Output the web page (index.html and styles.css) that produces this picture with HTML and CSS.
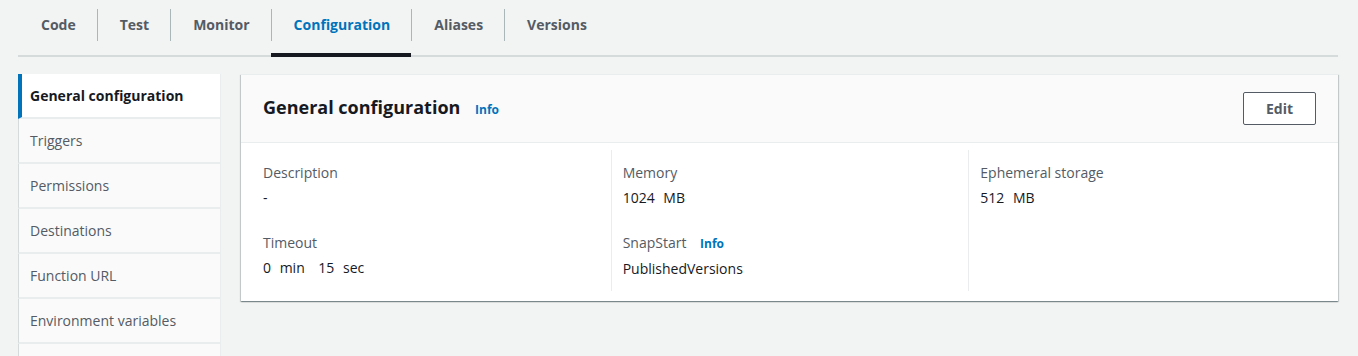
FILE: index.html
```html
<!DOCTYPE html>
<html lang="en">
<head>
    <meta charset="UTF-8">
    <title>Function configuration</title>
    <link rel="stylesheet" href="styles.css">
</head>
<body>

<div class="page">
    <div class="tabs">
        <a class="tab first"><span class="tab-label">Code</span></a>
        <a class="tab"><span class="tab-label">Test</span></a>
        <a class="tab"><span class="tab-label">Monitor</span></a>
        <a class="tab active"><span class="tab-label">Configuration</span></a>
        <a class="tab"><span class="tab-label">Aliases</span></a>
        <a class="tab"><span class="tab-label">Versions</span></a>
    </div>

    <div class="layout">
        <ul class="side-nav">
            <li class="active">General configuration</li>
            <li>Triggers</li>
            <li>Permissions</li>
            <li>Destinations</li>
            <li>Function URL</li>
            <li>Environment variables</li>
            <li></li>
        </ul>

        <div class="card">
            <div class="card-header">
                <h2>General configuration <a class="info">Info</a></h2>
                <button class="btn">Edit</button>
            </div>
            <div class="card-body">
                <div class="col">
                    <div class="field">
                        <div class="label">Description</div>
                        <div class="value">-</div>
                    </div>
                    <div class="field">
                        <div class="label">Timeout</div>
                        <div class="value">0 min <span class="gap">15 sec</span></div>
                    </div>
                </div>
                <div class="col">
                    <div class="field">
                        <div class="label">Memory</div>
                        <div class="value">1024 MB</div>
                    </div>
                    <div class="field">
                        <div class="label">SnapStart <a class="info">Info</a></div>
                        <div class="value">PublishedVersions</div>
                    </div>
                </div>
                <div class="col">
                    <div class="field">
                        <div class="label">Ephemeral storage</div>
                        <div class="value">512 MB</div>
                    </div>
                </div>
            </div>
        </div>
    </div>
</div>

</body>
</html>
```

FILE: styles.css
```css
body {
    font-family: "Open Sans", "Liberation Sans", Arial, sans-serif;
    font-size: 14px;
    color: #16191f;
    background-color: #f2f3f3;
    margin: 0;
}
.page {
    padding: 0 20px 0 18px;
}
.tabs {
    display: flex;
    border-bottom: 2px solid #d5dbdb;
    height: 55px;
}
.tab {
    box-sizing: border-box;
    height: 57px;
    margin-bottom: -2px;
    padding-top: 9px;
    border-bottom: 4px solid transparent;
    font-weight: bold;
    color: #545b64;
}
.tab-label {
    display: block;
    line-height: 32px;
    padding: 0 21px 0 22px;
    border-left: 1px solid #aab7b8;
}
.tab.first .tab-label {
    border-left-color: transparent;
}
.tab.active {
    border-bottom-color: #16191f;
    color: #0073bb;
}
.layout {
    display: flex;
    align-items: flex-start;
    gap: 20px;
    margin-top: 17px;
}
.side-nav {
    list-style: none;
    margin: 0;
    padding: 0;
    width: 203px;
    flex-shrink: 0;
}
.side-nav li {
    height: 43px;
    line-height: 43px;
    padding-left: 11px;
    background: #fafafa;
    border-left: 1px solid #d5dbdb;
    border-right: 1px solid #eaeded;
    border-bottom: 2px solid #eaeded;
    color: #545b64;
}
.side-nav li.active {
    background: #fff;
    border-left: 4px solid #0073bb;
    padding-left: 8px;
    font-weight: bold;
    color: #16191f;
}
.card {
    flex: 1;
    background: #fff;
    box-shadow: 0 1px 1px 0 rgba(0,28,36,0.3), 1px 1px 1px 0 rgba(0,28,36,0.15), -1px 1px 1px 0 rgba(0,28,36,0.15);
    border-top: 1px solid #eaeded;
}
.card-header {
    display: flex;
    align-items: center;
    justify-content: space-between;
    height: 67px;
    padding: 0 22px;
    background: #fafafa;
    border-bottom: 1px solid #eaeded;
}
.card-header h2 {
    margin: 0;
    font-size: 18px;
    line-height: 22px;
}
.info {
    margin-left: 10px;
    font-size: 12px;
    font-weight: bold;
    color: #0073bb;
}
.btn {
    height: 33px;
    padding: 0 22px;
    background: #fff;
    border: 1px solid #545b64;
    border-radius: 2px;
    font-family: inherit;
    font-size: 14px;
    font-weight: bold;
    color: #545b64;
}
.card-body {
    display: grid;
    grid-template-columns: repeat(3, 1fr);
    padding: 7px 12px 10px;
}
.col {
    padding: 12px 10px 11px;
}
.col + .col {
    border-left: 1px solid #eaeded;
    padding-left: 11px;
}
.field + .field {
    margin-top: 23px;
}
.label {
    line-height: 22px;
    color: #545b64;
}
.value {
    margin-top: 3px;
    line-height: 22px;
    word-spacing: 5px;
}
.gap {
    margin-left: 5px;
}
```
